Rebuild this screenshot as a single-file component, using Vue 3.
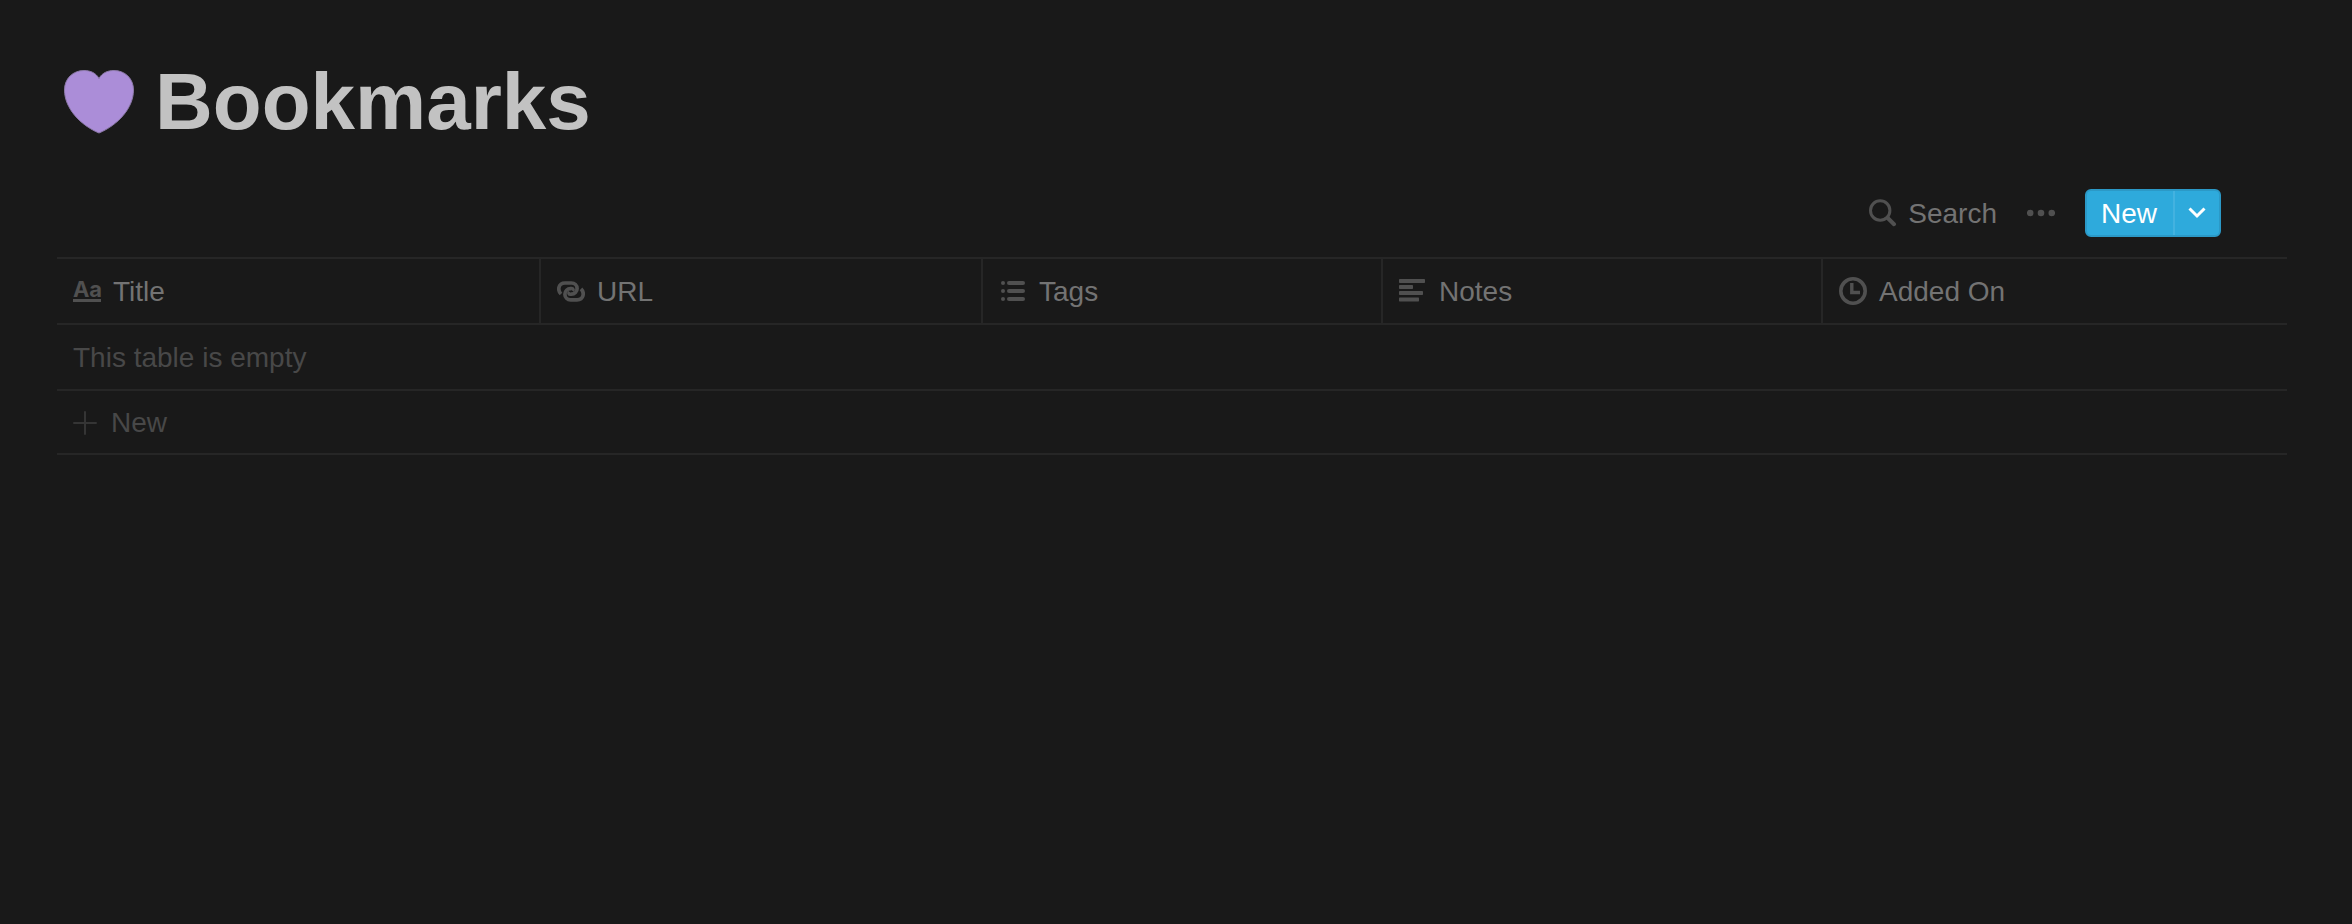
<script setup>
const columns = [
  { key: 'title', label: 'Title', width: 484 },
  { key: 'url', label: 'URL', width: 442 },
  { key: 'tags', label: 'Tags', width: 400 },
  { key: 'notes', label: 'Notes', width: 440 },
  { key: 'added', label: 'Added On', width: 464 },
]
</script>

<template>
  <main class="page">
    <h1 class="heading">
      <svg class="heart" viewBox="0 0 72 66" aria-hidden="true">
        <path d="M36 9.500C39 4 44.500 1.500 51 1.500C62 1.500 70.500 9.500 70.500 21C70.500 39 55 56 36 64C17 56 1.500 39 1.500 21C1.500 9.500 10 1.500 21 1.500C27.500 1.500 33 4 36 9.500Z" />
      </svg>
      <span>Bookmarks</span>
    </h1>

    <div class="toolbar">
      <div class="search">
        <svg width="28" height="28" viewBox="0 0 28 28" fill="none" stroke="currentColor" aria-hidden="true">
          <circle cx="11.200" cy="11.500" r="9.700" stroke-width="3" />
          <path d="M18.500 18.800L25 25.200" stroke-width="4" stroke-linecap="round" />
        </svg>
        <span class="text">Search</span>
      </div>
      <svg class="more" width="28" height="8" viewBox="0 0 28 8" fill="currentColor" aria-hidden="true">
        <circle cx="3.200" cy="4" r="3.300" /><circle cx="14" cy="4" r="3.300" /><circle cx="24.800" cy="4" r="3.300" />
      </svg>
      <div class="button">
        <span class="create">New</span>
        <span class="caret">
          <svg width="18" height="12" viewBox="0 0 18 12" fill="none" stroke="#fff" stroke-width="3" aria-hidden="true">
            <path d="M1.500 1.500L9 9L16.500 1.500" />
          </svg>
        </span>
      </div>
    </div>

    <section class="table">
      <div class="row head">
        <div v-for="c in columns" :key="c.key" class="cell" :style="{ width: c.width + 'px' }">
          <span v-if="c.key === 'title'" class="letters icon">Aa</span>
          <svg v-else-if="c.key === 'url'" class="icon" viewBox="0 0 28 28" fill="none" stroke="currentColor" stroke-width="3.700">
            <path d="M4 17C.400 13.500 1 6 8 6H14.500A5.600 5.600 0 0 1 14.500 17.200H13.500C12 17.200 11.600 16 12.500 14.900" />
            <path d="M24 11.800C27.600 15.300 27 22.800 20 22.800H13.500A5.600 5.600 0 0 1 13.500 11.600H14.500C16 11.600 16.400 12.800 15.500 13.900" />
          </svg>
          <svg v-else-if="c.key === 'tags'" class="icon" viewBox="0 0 28 28" fill="currentColor">
            <circle cx="4" cy="6" r="2" /><circle cx="4" cy="14" r="2" /><circle cx="4" cy="22" r="2" />
            <rect x="8" y="4" width="18" height="4" rx="2" /><rect x="8" y="12" width="18" height="4" rx="2" /><rect x="8" y="20" width="18" height="4" rx="2" />
          </svg>
          <svg v-else-if="c.key === 'notes'" class="icon" viewBox="0 0 28 28" fill="currentColor">
            <rect y="2" width="26" height="4" rx=".700" /><rect y="8" width="14" height="4" rx=".700" />
            <rect y="14" width="24" height="4" rx=".700" /><rect y="20.500" width="20" height="4" rx=".700" />
          </svg>
          <svg v-else class="icon" viewBox="0 0 28 28" fill="none" stroke="currentColor">
            <circle cx="14" cy="14" r="12.200" stroke-width="3.600" />
            <path d="M12.800 6V15.500H21" stroke-width="3.400" />
          </svg>
          <span class="text">{{ c.label }}</span>
        </div>
      </div>
      <div class="row empty">This table is empty</div>
      <div class="row add">
        <svg width="24" height="24" viewBox="0 0 24 24" fill="none" stroke="currentColor" stroke-width="2" stroke-linecap="round" aria-hidden="true">
          <path d="M12 1V23M1 12H23" />
        </svg>
        <span>New</span>
      </div>
    </section>
  </main>
</template>

<style>
body { background: #191919; }
</style>

<style scoped>
.page {
  box-sizing: border-box;
  height: 924px;
  padding: 54px 65px 0 57px;
  font: 28px/34px "Liberation Sans", Arial, sans-serif;
  color: #737373;
  background: #191919;
  overflow: hidden;
}
.heading {
  display: flex;
  align-items: center;
  height: 96px;
  margin: 0;
  padding-left: 6px;
  gap: 20px;
  font-size: 80px;
  line-height: 96px;
  font-weight: 700;
  color: #c2c2c2;
}
.heart { width: 72px; height: 66px; margin-bottom: 1px; }
.heart path { fill: #ab8dd8; stroke: #8c79a8; stroke-width: 1; }
.toolbar {
  display: flex;
  align-items: center;
  justify-content: flex-end;
  height: 48px;
  margin-top: 39px;
  padding-right: 66px;
}
.text { padding-top: 2px; }
.search { display: flex; align-items: center; gap: 11px; }
.search svg, .more { color: #505050; }
.more { margin: 0 30px 0 30px; }
.button {
  display: flex;
  box-sizing: border-box;
  width: 136px;
  height: 48px;
  border: 2px solid #2b99c7;
  border-radius: 6px;
  background: #2eaadc;
  color: #fff;
}
.create { width: 86px; padding-left: 14px; box-sizing: border-box; line-height: 45px; }
.caret {
  display: flex;
  flex: 1;
  align-items: center;
  justify-content: center;
  padding-right: 1px;
  border-left: 2px solid #43b2e0;
}
.table { margin-top: 20px; border-top: 2px solid #262626; }
.row { box-sizing: border-box; border-bottom: 2px solid #262626; }
.head { display: flex; height: 66px; }
.cell {
  display: flex;
  align-items: center;
  box-sizing: border-box;
  padding-left: 16px;
  gap: 12px;
  border-right: 2px solid #262626;
}
.cell:last-child { border-right: 0; }
.icon { flex: none; width: 28px; height: 28px; color: #505050; }
.letters {
  box-sizing: border-box;
  height: 22px;
  border-bottom: 3px solid #505050;
  font: 700 22px/18px Inter, sans-serif;
  letter-spacing: -0.2px;
}
.empty { height: 66px; padding: 1px 0 0 16px; line-height: 64px; color: #484848; }
.add {
  display: flex;
  align-items: center;
  height: 64px;
  padding: 2px 0 0 16px;
  gap: 14px;
  color: #484848;
}
.add svg { color: #353535; }
</style>
